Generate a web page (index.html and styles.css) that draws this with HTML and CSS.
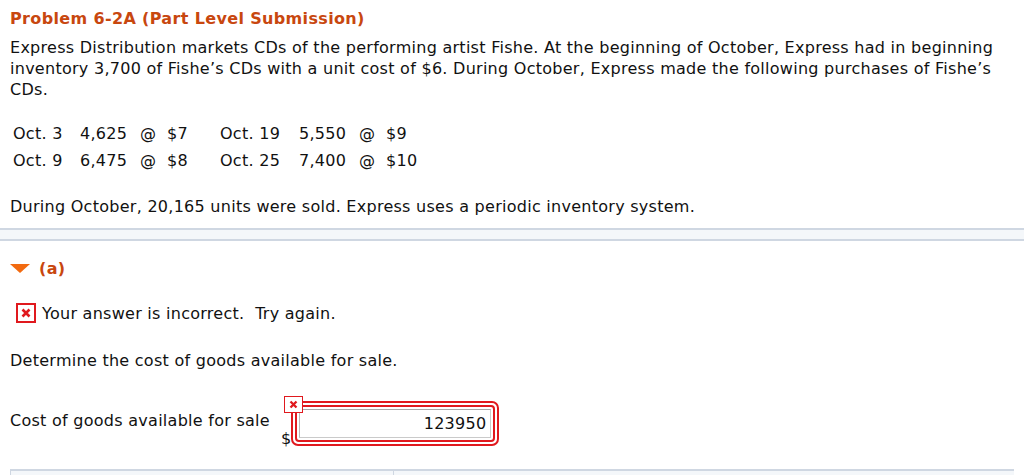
FILE: index.html
```
<!DOCTYPE html>
<html>
<head>
<meta charset="utf-8">
<link rel="stylesheet" href="styles.css">
</head>
<body>
<div class="page">
  <h1 class="title">Problem 6-2A (Part Level Submission)</h1>
  <p class="intro">Express Distribution markets CDs of the performing artist Fishe. At the beginning of October, Express had in beginning inventory 3,700 of Fishe’s CDs with a unit cost of $6. During October, Express made the following purchases of Fishe’s CDs.</p>
  <table class="purchases">
    <tr><td class="d1">Oct. 3</td><td class="q">4,625</td><td class="a">@</td><td class="p">$7</td><td class="d2">Oct. 19</td><td class="q">5,550</td><td class="a">@</td><td class="p">$9</td></tr>
    <tr><td class="d1">Oct. 9</td><td class="q">6,475</td><td class="a">@</td><td class="p">$8</td><td class="d2">Oct. 25</td><td class="q">7,400</td><td class="a">@</td><td class="p">$10</td></tr>
  </table>
  <p class="sold">During October, 20,165 units were sold. Express uses a periodic inventory system.</p>
</div>
<div class="band"></div>
<div class="page">
  <div class="part"><span class="tri"></span><span class="partlabel">(a)</span></div>
  <div class="feedback">
    <span class="xbox"><svg width="10" height="10" viewBox="0 0 10 10"><path d="M1.5 1.5 L8.5 8.5 M8.5 1.5 L1.5 8.5" stroke="#e0191e" stroke-width="2.6" stroke-linecap="butt"/></svg></span>
    <span>Your answer is incorrect.&nbsp; Try again.</span>
  </div>
  <p class="question">Determine the cost of goods available for sale.</p>
  <div class="answer">
    <span class="label">Cost of goods available for sale</span>
    <span class="dollar">$</span>
    <span class="field">
      <span class="ring"><span class="inner"><span class="input">123950</span></span></span>
      <span class="xsmall"><svg width="9" height="9" viewBox="0 0 9 9"><path d="M1.5 1.5 L7.5 7.5 M7.5 1.5 L1.5 7.5" stroke="#e0191e" stroke-width="2.3"/></svg></span>
    </span>
  </div>
  <div class="grid"><div class="cell c1"></div><div class="cell c2"></div></div>
</div>
</body>
</html>
```
FILE: styles.css
```
html, body { margin: 0; padding: 0; background: #fff; }
body { font-family: "DejaVu Sans", Verdana, sans-serif; font-size: 16px; letter-spacing: 0.27px; color: #111; }
.page { padding: 0 10px; }
.title { margin: 0; padding-top: 8px; font-size: 16px; letter-spacing: 0.35px; font-weight: bold; color: #c8470f; line-height: 21px; }
.intro { margin: 8px 0 0; line-height: 21px; }
.purchases { border-collapse: collapse; margin: 20px 0 0 3px; }
.purchases td { padding: 0; height: 27px; line-height: 27px; vertical-align: middle; white-space: nowrap; }
.d1 { width: 67px; }
.d2 { width: 79px; }
.q { width: 60px; }
.a { width: 27px; }
.p { width: 53px; }
.sold { margin: 22px 0 0; line-height: 21px; }
.band { margin-top: 11px; height: 9px; border-top: 2px solid #cfd7e2; border-bottom: 2px solid #cfd7e2; background: #f4f7fa; }
.part { display: flex; align-items: center; margin-top: 17px; height: 20px; }
.tri { width: 0; height: 0; border-left: 10px solid transparent; border-right: 10px solid transparent; border-top: 9px solid #f26a10; margin-right: 9px; }
.partlabel { color: #c8470f; font-weight: bold; letter-spacing: 0.35px; }
.feedback { display: flex; align-items: center; margin-top: 25px; margin-left: 6px; height: 20px; }
.xbox { display: inline-flex; align-items: center; justify-content: center; box-sizing: border-box; width: 20px; height: 20px; border: 2px solid #e0191e; margin-right: 6px; }
.xbox svg { display: block; }
.question { margin: 27px 0 0; line-height: 21px; }
.answer { display: flex; margin-top: 24px; height: 51px; }
.label { padding-top: 16px; }
.dollar { margin-left: 11px; align-self: flex-end; margin-bottom: -2px; }
.field { position: relative; margin-left: 0; margin-top: 6px; }
.ring { display: block; border: 2px solid #e0191e; border-radius: 7px; padding: 2px; }
.inner { display: block; border: 2px solid #e0191e; border-radius: 4px; padding: 2px; }
.input { display: block; width: 186px; height: 27px; line-height: 27px; text-align: right; padding-right: 4px; border: 1px solid #cacaca; border-top-color: #a8a8a8; border-left-color: #b8b8b8; }
.xsmall { position: absolute; left: -7px; top: -5px; box-sizing: border-box; width: 19px; height: 17px; background: #fff; border: 1px solid #e0191e; display: flex; align-items: center; justify-content: center; }
.xsmall svg { display: block; }
.grid { display: flex; margin-top: 23px; height: 12px; border-top: 2px solid #cfd7e2; border-left: 1px solid #cfd7e2; background: #f4f7fa; }
.c1 { width: 382px; border-right: 1px solid #cfd7e2; }
.c2 { flex: 1; }
```
